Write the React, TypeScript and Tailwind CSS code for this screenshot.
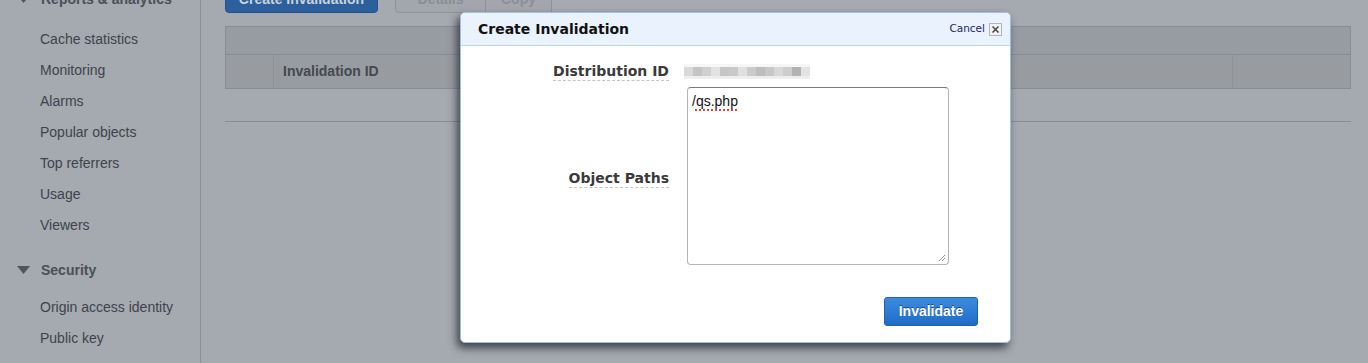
import React from 'react';

const navGroups = [
  {
    title: 'Reports & analytics',
    items: ['Cache statistics', 'Monitoring', 'Alarms', 'Popular objects', 'Top referrers', 'Usage', 'Viewers'],
  },
  {
    title: 'Security',
    items: ['Origin access identity', 'Public key'],
  },
];

// pixelated (blurred) distribution id
const blurCells = ['#d9d9d9', '#c4c4c4', '#cfcfcf', '#e2e2e2', '#c6c6c6', '#c9c9c9', '#e0e0e0', '#cbcbcb', '#bdbdbd', '#c7c7c7', '#d8d8d8', '#cdcdcd', '#b2b2b2', '#e3e3e3'];

function Triangle() {
  return (
    <svg width="13" height="9" viewBox="0 0 13 9" className="shrink-0">
      <path d="M0 0 L13 0 L6.5 8 Z" fill="#50545c" />
    </svg>
  );
}

function Sidebar() {
  return (
    <div className="w-[201px] shrink-0 border-r border-[#8c9096] font-['Liberation_Sans',Arial,sans-serif]">
      {navGroups.map((group, gi) => (
        <div key={group.title} className={gi === 0 ? '-mt-[12px]' : 'mt-[18px]'}>
          <div className="flex h-[22px] items-center gap-[11px] pl-[17px] text-[14px] font-bold text-[#4b4f58]">
            <Triangle />
            <span>{group.title}</span>
          </div>
          <div className={gi === 0 ? 'mt-[14px]' : 'mt-[11px]'}>
            {group.items.map(item => (
              <div key={item} className="flex h-[31px] items-center pl-[40px] text-[14px] text-[#3f434c]">
                {item}
              </div>
            ))}
          </div>
        </div>
      ))}
    </div>
  );
}

function Main() {
  return (
    <div className="flex-1 pl-[24px] pr-[17px] font-['Liberation_Sans',Arial,sans-serif]">
      {/* toolbar */}
      <div className="-mt-[15px] flex h-[28px] items-stretch text-[14px] font-bold">
        <div className="flex w-[153px] items-center justify-center rounded-[4px] border border-[#24518a] bg-[#2c609c] text-[#c9d3de]">
          Create Invalidation
        </div>
        <div className="ml-[17px] flex w-[91px] items-center justify-center rounded-l-[4px] border border-[#8f9399] bg-[#a3a7ad] text-[#8b8f95]">
          Details
        </div>
        <div className="flex w-[66px] items-center justify-center border border-l-0 border-[#8f9399] bg-[#a3a7ad] text-[#8b8f95]">
          Copy
        </div>
      </div>

      {/* table */}
      <div className="mt-[13px] border border-[#898d93]">
        <div className="h-[28px] border-b border-[#898d93] bg-[#979ba2]" />
        <div className="flex h-[33px] bg-[#989ca1] text-[14px] font-bold text-[#44484f]">
          <div className="w-[48px] border-r border-[#8e9298]" />
          <div className="flex flex-1 items-center pl-[9px]">Invalidation ID</div>
          <div className="flex w-[300px] items-center pl-[10px]">Status</div>
          <div className="flex w-[466px] items-center border-r border-[#8e9298] pl-[10px]">Date</div>
          <div className="w-[117px]" />
        </div>
      </div>
      <div className="mt-[32px] h-px bg-[#8a8e94]" />
    </div>
  );
}

function Modal() {
  return (
    <div className="absolute left-[460px] top-[12px] flex h-[331px] w-[551px] flex-col overflow-hidden rounded-[5px] border border-[#9cc0e8] bg-white shadow-[-3px_5px_8px_rgba(30,32,36,0.75)]">
      <div className="flex h-[33px] shrink-0 items-center justify-between border-b border-[#bcd5f2] bg-[#eaf2fd] pl-[17px] pr-[8px]">
        <span className="font-['DejaVu_Sans',Verdana,sans-serif] text-[14px] font-bold text-[#111]">Create Invalidation</span>
        <div className="flex items-center gap-[4px] font-['DejaVu_Sans',Verdana,sans-serif]">
          <span className="text-[10.5px] text-[#1c1f6b]">Cancel</span>
          <span className="flex h-[13px] w-[13px] items-center justify-center border border-[#b5b5b5] bg-[#f2f2f2]">
            <svg width="7" height="7" viewBox="0 0 7 7">
              <path d="M0.5 0.5 L6.5 6.5 M6.5 0.5 L0.5 6.5" stroke="#444" strokeWidth="1.5" />
            </svg>
          </span>
        </div>
      </div>

      <div className="flex flex-1 flex-col font-['DejaVu_Sans',Verdana,sans-serif]">
        <div className="mt-[16px] flex items-center">
          <div className="flex w-[208px] justify-end">
            <span className="border-b border-dashed border-[#c4c4c4] text-[14px] font-bold leading-[18px] text-[#3a3a3a]">Distribution ID</span>
          </div>
          <div className="ml-[15px] flex flex-col">
            <div className="flex h-[3px] w-[126px] bg-[#f6f6f6]" />
            <div className="flex">
              {blurCells.map((c, i) => (
                <div key={i} className="h-[9px] w-[9px]" style={{ backgroundColor: c }} />
              ))}
            </div>
            <div className="flex h-[3px] w-[126px] bg-[#eeeeee]" />
          </div>
        </div>

        <div className="mt-[6px] flex items-center">
          <div className="flex w-[208px] justify-end pt-[4px]">
            <span className="border-b border-dashed border-[#c4c4c4] text-[14px] font-bold leading-[18px] text-[#3a3a3a]">Object Paths</span>
          </div>
          <div className="relative ml-[18px] h-[178px] w-[262px] rounded-[4px] border border-[#b4b4b4] border-t-[#7a7a7a] bg-white px-[4px] pt-[3px] font-['Liberation_Sans',Arial,sans-serif] text-[14px] text-[#111]">
            <span>/</span>
            <span className="underline decoration-[#e0413a] decoration-dotted decoration-[1.5px] underline-offset-[3px]">qs.php</span>
            <svg className="absolute bottom-[2px] right-[2px]" width="8" height="8" viewBox="0 0 8 8">
              <path d="M1 7 L7 1 M4 7 L7 4" stroke="#777" strokeWidth="0.8" />
            </svg>
          </div>
        </div>

        <div className="mt-[32px] flex justify-end pr-[32px]">
          <div className="flex h-[29px] w-[94px] items-center justify-center rounded-[3px] border border-[#1f62b0] bg-gradient-to-b from-[#3c8be0] to-[#1f6cc7] font-['Liberation_Sans',Arial,sans-serif] text-[14px] font-bold text-white [text-shadow:0_-1px_0_rgba(0,0,0,0.45)]">
            Invalidate
          </div>
        </div>
      </div>
    </div>
  );
}

export default function App() {
  return (
    <div className="relative flex h-[363px] w-full overflow-hidden bg-[#a5a9b0]">
      <Sidebar />
      <Main />
      <Modal />
    </div>
  );
}
